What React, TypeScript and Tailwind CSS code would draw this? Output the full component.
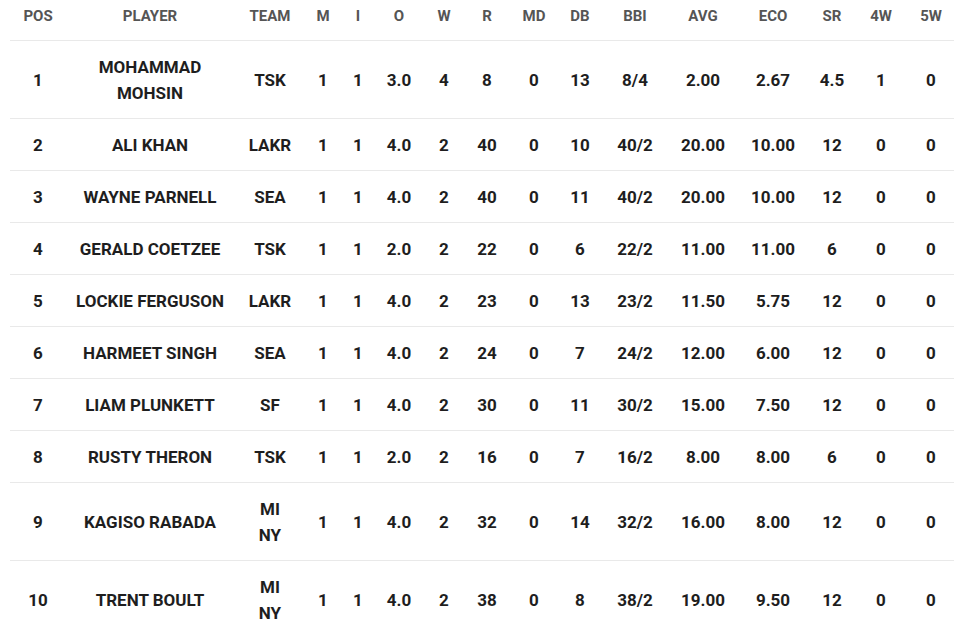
import React from "react";

const cols = [
  { h: "POS", w: 56 },
  { h: "PLAYER", w: 168 },
  { h: "TEAM", w: 72 },
  { h: "M", w: 34 },
  { h: "I", w: 36 },
  { h: "O", w: 46 },
  { h: "W", w: 44 },
  { h: "R", w: 42 },
  { h: "MD", w: 52 },
  { h: "DB", w: 40 },
  { h: "BBI", w: 70 },
  { h: "AVG", w: 66 },
  { h: "ECO", w: 74 },
  { h: "SR", w: 44 },
  { h: "4W", w: 54 },
  { h: "5W", w: 46 },
];

type Row = (string | string[])[];

const rows: Row[] = [
  ["1", ["MOHAMMAD", "MOHSIN"], "TSK", "1", "1", "3.0", "4", "8", "0", "13", "8/4", "2.00", "2.67", "4.5", "1", "0"],
  ["2", "ALI KHAN", "LAKR", "1", "1", "4.0", "2", "40", "0", "10", "40/2", "20.00", "10.00", "12", "0", "0"],
  ["3", "WAYNE PARNELL", "SEA", "1", "1", "4.0", "2", "40", "0", "11", "40/2", "20.00", "10.00", "12", "0", "0"],
  ["4", "GERALD COETZEE", "TSK", "1", "1", "2.0", "2", "22", "0", "6", "22/2", "11.00", "11.00", "6", "0", "0"],
  ["5", "LOCKIE FERGUSON", "LAKR", "1", "1", "4.0", "2", "23", "0", "13", "23/2", "11.50", "5.75", "12", "0", "0"],
  ["6", "HARMEET SINGH", "SEA", "1", "1", "4.0", "2", "24", "0", "7", "24/2", "12.00", "6.00", "12", "0", "0"],
  ["7", "LIAM PLUNKETT", "SF", "1", "1", "4.0", "2", "30", "0", "11", "30/2", "15.00", "7.50", "12", "0", "0"],
  ["8", "RUSTY THERON", "TSK", "1", "1", "2.0", "2", "16", "0", "7", "16/2", "8.00", "8.00", "6", "0", "0"],
  ["9", "KAGISO RABADA", ["MI", "NY"], "1", "1", "4.0", "2", "32", "0", "14", "32/2", "16.00", "8.00", "12", "0", "0"],
  ["10", "TRENT BOULT", ["MI", "NY"], "1", "1", "4.0", "2", "38", "0", "8", "38/2", "19.00", "9.50", "12", "0", "0"],
];

export default function App() {
  return (
    <div className="w-[954px] h-[630px] overflow-hidden bg-white pl-[10px]" style={{ fontFamily: "Roboto, 'Liberation Sans', sans-serif" }}>
      <table className="border-collapse table-fixed w-[944px]">
        <colgroup>
          {cols.map((c, i) => (
            <col key={i} style={{ width: c.w }} />
          ))}
        </colgroup>
        <thead>
          <tr className="border-b border-[#e9e9e9]">
            {cols.map((c, i) => (
              <th key={i} className="h-[40px] p-0 pb-[8px] text-center align-middle text-[15px] font-bold text-[#555555] leading-[26px]">
                {c.h}
              </th>
            ))}
          </tr>
        </thead>
        <tbody>
          {rows.map((r, ri) => (
            <tr key={ri} className="border-b border-[#e9e9e9]">
              {r.map((cell, ci) => (
                <td key={ci} className="p-0 pt-[13px] pb-[12px] text-center align-middle text-[17px] font-bold text-[#1e1e1e] leading-[26px]">
                  {Array.isArray(cell) ? cell.map((l, li) => <div key={li}>{l}</div>) : cell}
                </td>
              ))}
            </tr>
          ))}
        </tbody>
      </table>
    </div>
  );
}
